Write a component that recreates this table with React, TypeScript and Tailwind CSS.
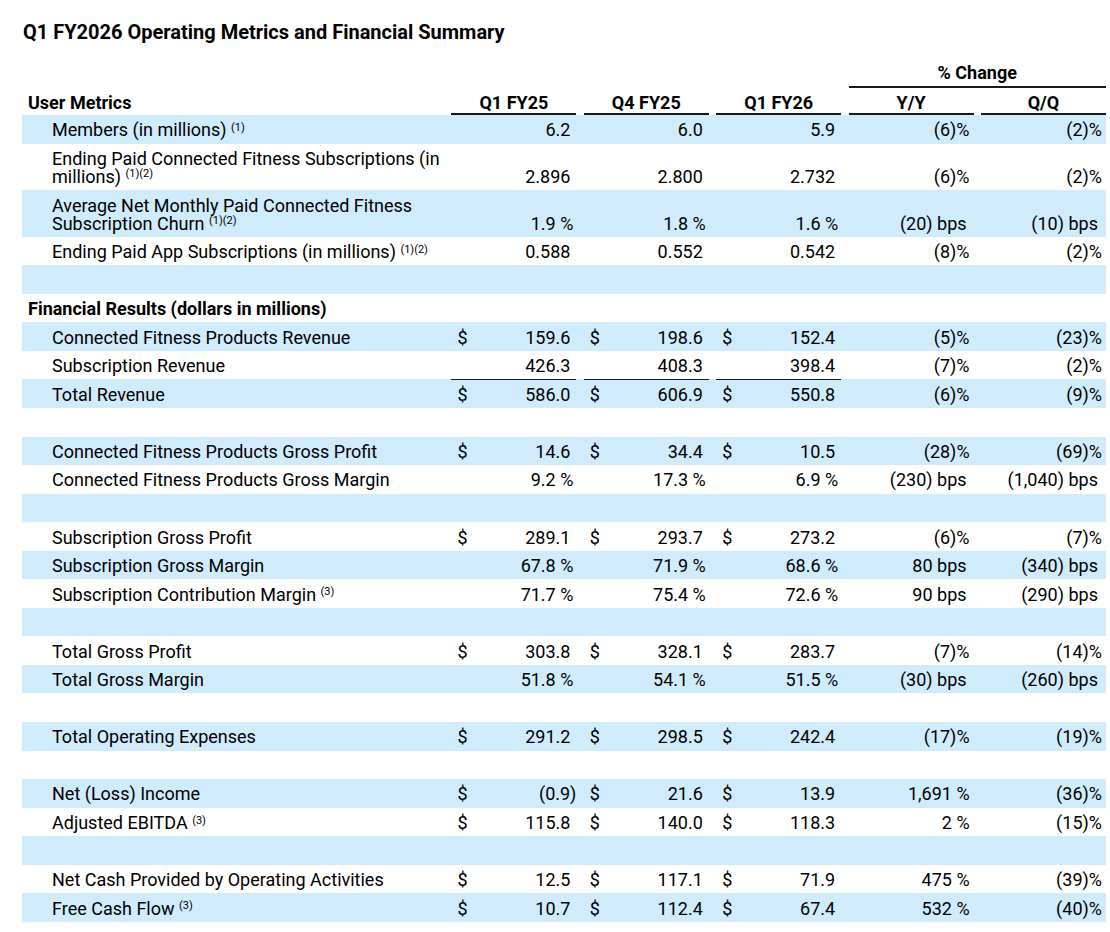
import React from 'react'

type Row = {
  label?: React.ReactNode
  bold?: boolean
  tall?: boolean
  dollar?: boolean
  rule?: boolean
  vals?: string[]
}

const S = ({ n }: { n: string }) => <sup className="text-[11px]">{n}</sup>

const ROWS: Row[] = [
  { label: <>Members (in millions) <S n="(1)" /></>, vals: ['6.2', '6.0', '5.9', '(6)%', '(2)%'] },
  { label: <>Ending Paid Connected Fitness Subscriptions (in<br />millions) <S n="(1)(2)" /></>, tall: true, vals: ['2.896', '2.800', '2.732', '(6)%', '(2)%'] },
  { label: <>Average Net Monthly Paid Connected Fitness<br />Subscription Churn <S n="(1)(2)" /></>, tall: true, vals: ['1.9 %', '1.8 %', '1.6 %', '(20) bps', '(10) bps'] },
  { label: <>Ending Paid App Subscriptions (in millions) <S n="(1)(2)" /></>, vals: ['0.588', '0.552', '0.542', '(8)%', '(2)%'] },
  {},
  { label: 'Financial Results (dollars in millions)', bold: true },
  { label: 'Connected Fitness Products Revenue', dollar: true, vals: ['159.6', '198.6', '152.4', '(5)%', '(23)%'] },
  { label: 'Subscription Revenue', vals: ['426.3', '408.3', '398.4', '(7)%', '(2)%'] },
  { label: 'Total Revenue', dollar: true, rule: true, vals: ['586.0', '606.9', '550.8', '(6)%', '(9)%'] },
  {},
  { label: 'Connected Fitness Products Gross Profit', dollar: true, vals: ['14.6', '34.4', '10.5', '(28)%', '(69)%'] },
  { label: 'Connected Fitness Products Gross Margin', vals: ['9.2 %', '17.3 %', '6.9 %', '(230) bps', '(1,040) bps'] },
  {},
  { label: 'Subscription Gross Profit', dollar: true, vals: ['289.1', '293.7', '273.2', '(6)%', '(7)%'] },
  { label: 'Subscription Gross Margin', vals: ['67.8 %', '71.9 %', '68.6 %', '80 bps', '(340) bps'] },
  { label: <>Subscription Contribution Margin <S n="(3)" /></>, vals: ['71.7 %', '75.4 %', '72.6 %', '90 bps', '(290) bps'] },
  {},
  { label: 'Total Gross Profit', dollar: true, vals: ['303.8', '328.1', '283.7', '(7)%', '(14)%'] },
  { label: 'Total Gross Margin', vals: ['51.8 %', '54.1 %', '51.5 %', '(30) bps', '(260) bps'] },
  {},
  { label: 'Total Operating Expenses', dollar: true, vals: ['291.2', '298.5', '242.4', '(17)%', '(19)%'] },
  {},
  { label: 'Net (Loss) Income', dollar: true, vals: ['(0.9)', '21.6', '13.9', '1,691 %', '(36)%'] },
  { label: <>Adjusted EBITDA <S n="(3)" /></>, dollar: true, vals: ['115.8', '140.0', '118.3', '2 %', '(15)%'] },
  {},
  { label: 'Net Cash Provided by Operating Activities', dollar: true, vals: ['12.5', '117.1', '71.9', '475 %', '(39)%'] },
  { label: <>Free Cash Flow <S n="(3)" /></>, dollar: true, vals: ['10.7', '112.4', '67.4', '532 %', '(40)%'] },
]

const GRID = 'grid grid-cols-[422px_repeat(5,132.4px)]'

// right padding so numbers line up and %, ) and bps hang like the spreadsheet
function padQuarter(v: string) {
  if (v.endsWith('%')) return 'pr-[3px]'
  if (v.endsWith(')')) return 'pr-[0px]'
  return 'pr-[6px]'
}

function padChange(v: string, qq: boolean) {
  if (v.endsWith('bps')) return qq ? 'pr-[8px]' : 'pr-[7px]'
  return 'pr-[4px]'
}

export default function App() {
  return (
    <div className="min-h-screen w-[1110px] bg-white font-['Roboto',sans-serif] text-black">
      <div className="h-[56px] pl-[23px] pt-[20px] text-[20px] font-bold leading-[24px]">
        Q1 FY2026 Operating Metrics and Financial Summary
      </div>

      <div className="ml-[22px] w-[1084px] text-[18px]">
        <div className={`${GRID} h-[32px]`}>
          <div className="col-span-4" />
          <div className="col-span-2 ml-[7.4px] flex items-end justify-center border-b-2 border-[#1a1a1a] pb-[3px] font-bold leading-[21px]">
            % Change
          </div>
        </div>

        <div className={`${GRID} h-[27px] font-bold leading-[21px]`}>
          <div className="flex items-end border-b-2 border-transparent pl-[6px]">User Metrics</div>
          {['Q1 FY25', 'Q4 FY25', 'Q1 FY26', 'Y/Y', 'Q/Q'].map((h) => (
            <div key={h} className="ml-[7.4px] flex items-end justify-center border-b-2 border-[#1a1a1a]">
              {h}
            </div>
          ))}
        </div>

        {ROWS.map((r, i) => (
          <div
            key={i}
            className={`${GRID} leading-[17.5px] ${r.tall ? 'h-[46.6px]' : 'h-[28.55px]'} ${i % 2 === 0 ? 'bg-[#d0ebfc]' : 'bg-white'}`}
          >
            <div className={`flex items-end whitespace-nowrap pb-[4.7px] ${r.bold ? 'pl-[6px] font-bold' : 'pl-[30px]'}`}>
              <span>{r.label}</span>
            </div>
            {r.vals?.slice(0, 3).map((v, j) => (
              <div
                key={j}
                className={`ml-[7.4px] flex items-end justify-between pb-[4.7px] pl-[6px] ${padQuarter(v)} ${r.rule ? 'border-t-[1.5px] border-[#1a1a1a]' : ''}`}
              >
                <span>{r.dollar ? '$' : ''}</span>
                <span className="whitespace-nowrap">{v}</span>
              </div>
            ))}
            {r.vals?.slice(3).map((v, j) => (
              <div key={j + 3} className={`flex items-end justify-end whitespace-nowrap pb-[4.7px] ${padChange(v, j === 1)}`}>
                {v}
              </div>
            ))}
          </div>
        ))}
      </div>
    </div>
  )
}
